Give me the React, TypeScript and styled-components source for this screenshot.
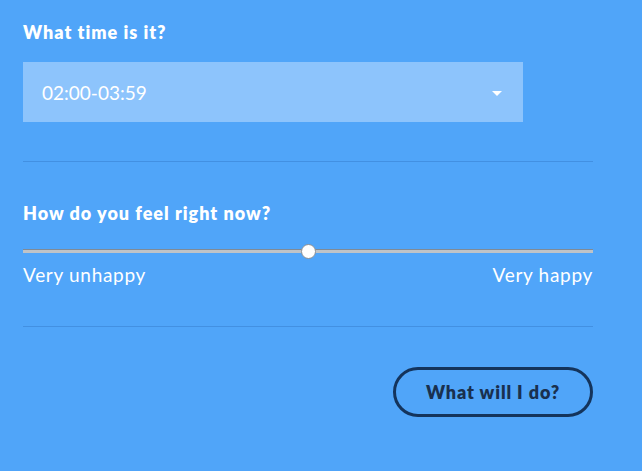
import React, { useState } from 'react';
import styled, { createGlobalStyle } from 'styled-components';

const GlobalStyle = createGlobalStyle`
  html, body {
    margin: 0;
    padding: 0;
    background: #50a5f9;
  }
  body {
    font-family: Lato, "Open Sans", sans-serif;
  }
`;

const Page = styled.div`
  width: 642px;
  min-height: 471px;
  box-sizing: border-box;
  padding: 22px 49px 0 23px;
  background: #50a5f9;
  color: #ffffff;
`;

const Section = styled.section`
  display: flex;
  flex-direction: column;
`;

const Question = styled.h2`
  margin: 0;
  font-size: 18px;
  line-height: 20px;
  font-weight: 800;
  letter-spacing: 1px;
`;

const SelectWrap = styled.div`
  position: relative;
  width: 500px;
  height: 60px;
  margin-top: 20px;
`;

const Select = styled.select`
  appearance: none;
  -webkit-appearance: none;
  width: 100%;
  height: 100%;
  border: none;
  border-radius: 0;
  outline: none;
  padding: 0 19px;
  background: #8dc4fc;
  color: #ffffff;
  font-family: Lato, "Open Sans", sans-serif;
  font-size: 19px;
`;

const Caret = styled.span`
  position: absolute;
  right: 21px;
  top: 29px;
  width: 0;
  height: 0;
  border-left: 5px solid transparent;
  border-right: 5px solid transparent;
  border-top: 5px solid #ffffff;
  pointer-events: none;
`;

const Divider = styled.hr<{ $top: number }>`
  margin: ${p => p.$top}px 0 0;
  border: none;
  height: 1px;
  background: #4290e2;
`;

const Range = styled.input`
  -webkit-appearance: none;
  appearance: none;
  width: 100%;
  margin: 20px 0 0;
  height: 16px;
  background: transparent;

  &::-webkit-slider-runnable-track {
    height: 4px;
    background: #bfc3c7;
    border-top: 1px solid #7f8a96;
    box-sizing: border-box;
  }
  &::-webkit-slider-thumb {
    -webkit-appearance: none;
    width: 15px;
    height: 15px;
    margin-top: -6px;
    border-radius: 50%;
    background: #ffffff;
    border: 1px solid #8a8f95;
    box-sizing: border-box;
  }
`;

const Labels = styled.div`
  display: flex;
  justify-content: space-between;
  margin-top: 5px;
  font-size: 19px;
  line-height: 22px;
  letter-spacing: 0.7px;
`;

const Actions = styled.div`
  display: flex;
  justify-content: flex-end;
  margin-top: 40px;
`;

const Button = styled.button`
  width: 200px;
  height: 50px;
  border: 3px solid #14345c;
  border-radius: 25px;
  background: transparent;
  color: #19304f;
  font-family: Lato, "Open Sans", sans-serif;
  font-size: 18px;
  font-weight: 800;
  letter-spacing: 0.9px;
  cursor: pointer;
`;

const times = ['00:00-01:59', '02:00-03:59', '04:00-05:59', '06:00-07:59'];

const App: React.FC = () => {
  const [time, setTime] = useState('02:00-03:59');
  const [mood, setMood] = useState(50);

  return (
    <>
      <GlobalStyle />
      <Page>
        <Section>
          <Question>What time is it?</Question>
          <SelectWrap>
            <Select value={time} onChange={e => setTime(e.target.value)}>
              {times.map(t => (
                <option key={t} value={t}>{t}</option>
              ))}
            </Select>
            <Caret />
          </SelectWrap>
        </Section>
        <Divider $top={39} />
        <Section style={{ marginTop: 41 }}>
          <Question>How do you feel right now?</Question>
          <Range
            type="range"
            min={0}
            max={100}
            value={mood}
            onChange={e => setMood(Number(e.target.value))}
          />
          <Labels>
            <span>Very unhappy</span>
            <span>Very happy</span>
          </Labels>
        </Section>
        <Divider $top={40} />
        <Actions>
          <Button>What will I do?</Button>
        </Actions>
      </Page>
    </>
  );
};

export default App;
